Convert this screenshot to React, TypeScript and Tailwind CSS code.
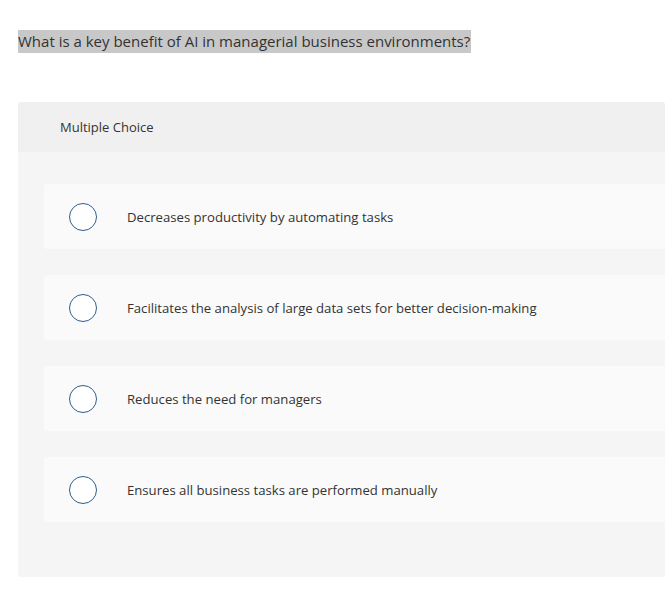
export default function App() {
  const options = [
    'Decreases productivity by automating tasks',
    'Facilitates the analysis of large data sets for better decision-making',
    'Reduces the need for managers',
    'Ensures all business tasks are performed manually',
  ];

  return (
    <div className="min-h-screen bg-white overflow-hidden text-[#333]" style={{ fontFamily: '"Open Sans", sans-serif' }}>
      {/* Pregunta */}
      <div className="pt-[29px] pl-[18px] h-[52px]">
        <span className="inline-block bg-[#c8c8c8] text-[15px] leading-[23px] h-[23px] pr-[1px]">
          What is a key benefit of AI in managerial business environments?
        </span>
      </div>

      {/* Tarjeta */}
      <div className="mt-[50px] ml-[18px] w-[647px] rounded-[3px] bg-[#f5f5f5] pb-[55px]">
        <div className="h-[50px] rounded-t-[3px] bg-[#f0f0f0] flex items-center pl-[42px] pt-[1px] text-[13px]">
          Multiple Choice
        </div>
        <div className="pt-[32px] pl-[26px] flex flex-col gap-[26px]">
          {options.map((opt) => (
            <div key={opt} className="h-[65px] rounded-l-[3px] bg-[#fafafa] flex items-center">
              <div className="ml-[25px] w-[28px] h-[28px] rounded-full border-[1.5px] border-[#2f5e8e] bg-white shrink-0" />
              <span className="ml-[30px] pt-[2px] text-[13.15px]">{opt}</span>
            </div>
          ))}
        </div>
      </div>
    </div>
  );
}
